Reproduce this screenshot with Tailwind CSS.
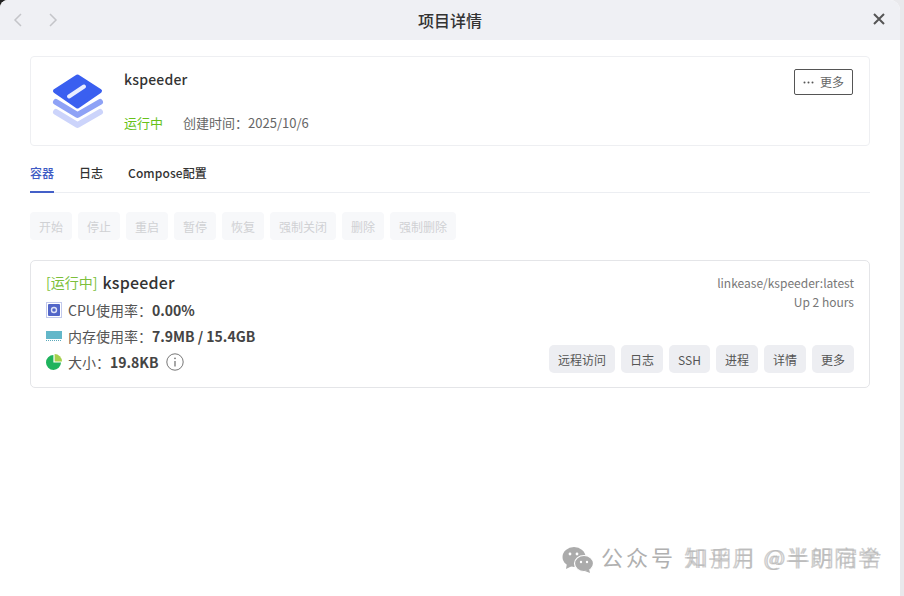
<!DOCTYPE html>
<html lang="zh">
<head>
<meta charset="utf-8">
<script src="https://cdn.jsdelivr.net/npm/@tailwindcss/browser@4"></script>
</head>
<body class="relative w-[904px] h-[596px] overflow-hidden bg-[#e9e9ec] font-['Noto_Sans_CJK_SC','Noto_Sans',sans-serif] text-[#333]">
<div class="absolute left-0 top-0 w-2 h-2 bg-[#222]"></div>
<div class="relative w-[900px] h-[596px] bg-white rounded-tl-[8px] rounded-tr-[10px] overflow-hidden">
  <header class="relative h-10 bg-[#eff0f4] flex items-center justify-center">
    <div class="absolute left-[12px] top-[13px] flex gap-[24px]">
      <svg width="12" height="14" viewBox="0 0 12 14" fill="none" stroke="#c4c5c9" stroke-width="1.5"><path d="M9 1L3 7l6 6"/></svg>
      <svg width="12" height="14" viewBox="0 0 12 14" fill="none" stroke="#c4c5c9" stroke-width="1.5"><path d="M2 1l6 6-6 6"/></svg>
    </div>
    <span class="text-base font-medium text-[#333]">项目详情</span>
    <svg class="absolute left-[873px] top-[13px]" width="12" height="12" viewBox="0 0 12 12" fill="none" stroke="#555" stroke-width="2"><path d="M1 1l10 10M11 1L1 11"/></svg>
  </header>

  <main class="px-[30px] pt-4">
    <section class="h-[90px] border border-[#eeeff2] rounded flex pl-[20px] pr-4">
      <svg class="mt-[17px]" width="54" height="56" viewBox="0 0 54 56" fill="none" stroke-linecap="round" stroke-linejoin="round">
        <path d="M5 38l21.5 13L49 38" stroke="#ccd4fb" stroke-width="6"/>
        <path d="M5 28l21.5 13L49 28" stroke="#8ea2f6" stroke-width="6"/>
        <path d="M26.5 2.5L49 17 26.5 32.5 4 17z" fill="#3a5ff0" stroke="#3a5ff0" stroke-width="4"/>
        <path d="M18 22.5l15-10" stroke="#e8ecff" stroke-width="4"/>
      </svg>
      <div class="ml-[19px] flex-1">
        <div class="mt-[11px] text-sm leading-[22px] font-medium text-[#333] tracking-[0.2px]">kspeeder</div>
        <div class="mt-[23px] flex items-center text-[13px] leading-5">
          <span class="text-[#67c21a]">运行中</span>
          <span class="ml-[20px] text-[#666]">创建时间：2025/10/6</span>
        </div>
      </div>
      <button class="mt-[12px] h-[26px] w-[59px] border border-[#555] rounded-[2px] flex items-center justify-center gap-[6px] text-xs text-[#666]">
        <svg width="11" height="3" viewBox="0 0 11 3" fill="#555"><circle cx="1.5" cy="1.5" r="1"/><circle cx="5.5" cy="1.5" r="1"/><circle cx="9.5" cy="1.5" r="1"/></svg>更多
      </button>
    </section>

    <nav class="mt-[12px] h-[35px] border-b border-[#eceef2] flex gap-[25px] text-xs font-medium">
      <a class="relative h-[35px] leading-[30px] text-[#3f5bc4]">容器<span class="absolute left-0 right-0 bottom-0 h-[2px] bg-[#4460c8]"></span></a>
      <a class="leading-[30px] text-[#333]">日志</a>
      <a class="leading-[30px] text-[#333] tracking-[0.1px]">Compose配置</a>
    </nav>

    <div class="mt-[19px] flex gap-[6px] text-xs text-[#d0d1d4]">
      <span class="h-7 px-[9px] leading-[30px] rounded bg-[#f7f8fa]">开始</span>
      <span class="h-7 px-[9px] leading-[30px] rounded bg-[#f7f8fa]">停止</span>
      <span class="h-7 px-[9px] leading-[30px] rounded bg-[#f7f8fa]">重启</span>
      <span class="h-7 px-[9px] leading-[30px] rounded bg-[#f7f8fa]">暂停</span>
      <span class="h-7 px-[9px] leading-[30px] rounded bg-[#f7f8fa]">恢复</span>
      <span class="h-7 px-[9px] leading-[30px] rounded bg-[#f7f8fa]">强制关闭</span>
      <span class="h-7 px-[9px] leading-[30px] rounded bg-[#f7f8fa]">删除</span>
      <span class="h-7 px-[9px] leading-[30px] rounded bg-[#f7f8fa]">强制删除</span>
    </div>

    <section class="mt-[20px] h-[128px] border border-[#e4e5e8] rounded-[5px] flex justify-between pl-[15px] pr-[15px]">
      <div class="flex flex-col">
        <div class="mt-[9px] h-6 flex items-center gap-[5px]">
          <span class="text-sm text-[#7cbf3b]">[运行中]</span>
          <span class="text-base font-medium text-[#333] tracking-[0.2px]">kspeeder</span>
        </div>
        <div class="mt-[3px] h-[26px] flex items-center text-sm text-[#555]">
          <svg width="16" height="16" viewBox="0 0 16 16" class="mr-[6px]"><rect x="0.5" y="0.5" width="15" height="15" fill="none" stroke="#8492d8" stroke-dasharray="1 1"/><rect x="2" y="2" width="12" height="12" rx="1" fill="#5266c8"/><circle cx="8" cy="8" r="3.2" fill="#dfe3f7"/><circle cx="8" cy="8" r="1.8" fill="#5266c8"/></svg>
          <span>CPU使用率：</span><span class="font-semibold text-[#444]">0.00%</span>
        </div>
        <div class="h-[26px] flex items-center text-sm text-[#555]">
          <svg width="16" height="12" viewBox="0 0 16 12" class="mr-[6px]"><rect y="1" width="16" height="8" fill="#63b7c9"/><path d="M0 10.5h16" stroke="#5aa8ba" stroke-dasharray="1 1"/></svg>
          <span>内存使用率：</span><span class="font-semibold text-[#444]">7.9MB / 15.4GB</span>
        </div>
        <div class="h-[26px] flex items-center text-sm text-[#555]">
          <svg width="16" height="16" viewBox="0 0 16 16" class="mr-[6px]"><path d="M7.4 1A7.5 7.5 0 1 0 15 8.6H7.4z" fill="#1fb35d"/><path d="M8.6 0A7.4 7.4 0 0 1 16 7.4H8.6z" fill="#a6d04c"/></svg>
          <span>大小：</span><span class="font-semibold text-[#444]">19.8KB</span>
          <svg width="18" height="18" viewBox="0 0 18 18" fill="none" stroke="#777" class="ml-[8px]"><circle cx="9" cy="9" r="8.2"/><path d="M9 8v5.5" stroke-width="1.3"/><circle cx="9" cy="5.3" r="0.9" fill="#777" stroke="none"/></svg>
        </div>
      </div>
      <div class="flex flex-col items-end">
        <div class="mt-[12px] text-xs leading-[20px] text-[#777]">linkease/kspeeder:latest</div>
        <div class="text-xs leading-[18px] text-[#777]">Up 2 hours</div>
        <div class="mt-[34px] flex gap-[6px] text-xs text-[#555]">
          <span class="h-7 px-[9px] leading-[30px] rounded-[5px] bg-[#edeef2]">远程访问</span>
          <span class="h-7 px-[9px] leading-[30px] rounded-[5px] bg-[#edeef2]">日志</span>
          <span class="h-7 w-[41px] text-center leading-[30px] rounded-[5px] bg-[#edeef2]">SSH</span>
          <span class="h-7 px-[9px] leading-[30px] rounded-[5px] bg-[#edeef2]">进程</span>
          <span class="h-7 px-[9px] leading-[30px] rounded-[5px] bg-[#edeef2]">详情</span>
          <span class="h-7 px-[9px] leading-[30px] rounded-[5px] bg-[#edeef2]">更多</span>
        </div>
      </div>
    </section>
  </main>

  <div class="absolute left-[562px] top-[546px] flex items-center text-[#b0b0b0]">
    <svg width="32" height="27" viewBox="0 0 32 27" fill="#ababab">
      <ellipse cx="12" cy="11" rx="11.5" ry="10"/><path d="M5 17l-1 6 6-3z"/>
      <ellipse cx="22" cy="17.5" rx="9.5" ry="8" stroke="#fff" stroke-width="1.2"/><path d="M27 23l1 4-5-2z"/>
      <circle cx="8" cy="8" r="1.4" fill="#fff"/><circle cx="15" cy="8" r="1.4" fill="#fff"/><circle cx="19" cy="16" r="1.2" fill="#fff"/><circle cx="25" cy="16" r="1.2" fill="#fff"/>
    </svg>
    <span class="ml-[7px] -mt-[6px] text-[22px] tracking-[3px]">公众号</span>
    <span class="relative ml-[8px] -mt-[6px] whitespace-nowrap text-[22px] tracking-[2px] text-[#cfcfcf]">知乎用 @半朗同学<span class="absolute left-[2px] top-0 whitespace-nowrap text-[#b4b4b4]/70">知用月 @半明宿舍</span></span>
  </div>
</div>
</body>
</html>
